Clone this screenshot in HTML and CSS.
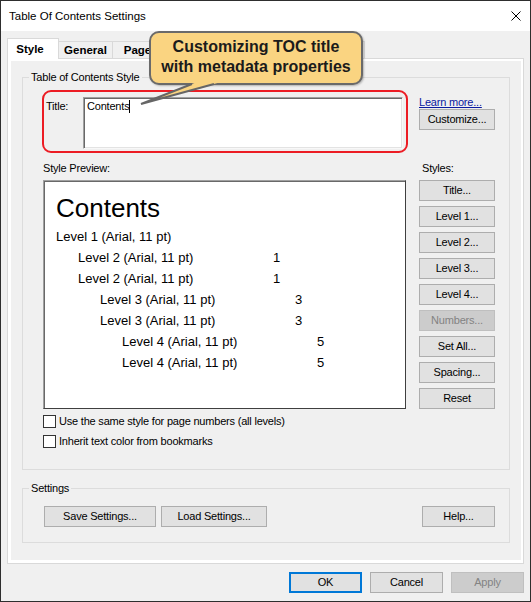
FILE: index.html
```html
<!DOCTYPE html>
<html>
<head>
<meta charset="utf-8">
<link rel="stylesheet" href="styles.css">
</head>
<body>
<div class="window">
  <div class="titlebar">
    <span class="title">Table Of Contents Settings</span>
    <svg class="close" width="10" height="10" viewBox="0 0 10 10"><path d="M0.5 0.5L9.5 9.5M9.5 0.5L0.5 9.5" stroke="#000" stroke-width="1" fill="none"/></svg>
  </div>
  <div class="tabs">
    <div class="tab active t-style">Style</div>
    <div class="tab t-general">General</div>
    <div class="tab t-page">Page Numbers</div>
    <div class="tab t-lead">Leaders</div>
    <div class="tab t-adv">Advanced</div>
  </div>
  <div class="panel">
    <div class="page">
      <fieldset class="group main">
        <legend>Table of Contents Style</legend>
        <div class="grid">
          <div class="title-row">
            <span class="title-label">Title:</span>
            <div class="textbox">Contents<span class="caret"></span></div>
            <div class="highlight"></div>
          </div>
          <div class="title-side">
            <a class="link">Learn more...</a>
            <button class="btn customize">Customize...</button>
          </div>
          <div class="lbl">Style Preview:</div>
          <div class="lbl styles-lbl">Styles:</div>
          <div class="preview">
            <div class="pv-title">Contents</div>
            <div class="pv-row">Level 1 (Arial, 11 pt)</div>
            <div class="pv-row l2"><span class="pv-text">Level 2 (Arial, 11 pt)</span><span>1</span></div>
            <div class="pv-row l2"><span class="pv-text">Level 2 (Arial, 11 pt)</span><span>1</span></div>
            <div class="pv-row l3"><span class="pv-text">Level 3 (Arial, 11 pt)</span><span>3</span></div>
            <div class="pv-row l3"><span class="pv-text">Level 3 (Arial, 11 pt)</span><span>3</span></div>
            <div class="pv-row l4"><span class="pv-text">Level 4 (Arial, 11 pt)</span><span>5</span></div>
            <div class="pv-row l4"><span class="pv-text">Level 4 (Arial, 11 pt)</span><span>5</span></div>
          </div>
          <div class="style-buttons">
            <button class="btn">Title...</button>
            <button class="btn">Level 1...</button>
            <button class="btn">Level 2...</button>
            <button class="btn">Level 3...</button>
            <button class="btn">Level 4...</button>
            <button class="btn" disabled>Numbers...</button>
            <button class="btn">Set All...</button>
            <button class="btn">Spacing...</button>
            <button class="btn">Reset</button>
          </div>
        </div>
        <div class="checks">
          <label class="check"><span class="box"></span><span>Use the same style for page numbers (all levels)</span></label>
          <label class="check"><span class="box"></span><span>Inherit text color from bookmarks</span></label>
        </div>
      </fieldset>
      <fieldset class="group settings">
        <legend>Settings</legend>
        <div class="settings-row">
          <button class="btn save">Save Settings...</button>
          <button class="btn load">Load Settings...</button>
          <button class="btn help">Help...</button>
        </div>
      </fieldset>
    </div>
  </div>
  <div class="footer">
    <button class="btn fbtn ok">OK</button>
    <button class="btn fbtn">Cancel</button>
    <button class="btn fbtn" disabled>Apply</button>
  </div>

  <div class="callout">Customizing TOC title<br>with metadata properties</div>
  <svg class="tail" width="90" height="30" viewBox="0 0 90 30">
    <polygon points="61,4 5,26 85,4" fill="#fad481"/>
    <polyline points="56,6 5,26 78,6" fill="none" stroke="#666" stroke-width="2" stroke-linejoin="miter"/>
  </svg>
</div>
</body>
</html>
```

FILE: styles.css
```css
html, body {
  margin: 0;
  padding: 0;
}
body {
  font-family: "Liberation Sans", Arial, sans-serif;
  font-size: 11px;
  letter-spacing: -0.2px;
  color: #000;
  background: #fff;
}
.window {
  width: 531px;
  height: 602px;
  box-sizing: border-box;
  border: 1px solid #2e2e2e;
  background: #f0f0f0;
  position: relative;
  display: flex;
  flex-direction: column;
}
.titlebar {
  height: 30px;
  flex: none;
  background: #fff;
  display: flex;
  align-items: center;
  justify-content: space-between;
  padding: 0 9px 0 8px;
  font-size: 11.5px;
  letter-spacing: 0;
}
.close {
  display: block;
}
.tabs {
  display: flex;
  align-items: flex-end;
  height: 20px;
  margin: 7px 0 0 6px;
  flex: none;
}
.tab {
  box-sizing: border-box;
  height: 17px;
  border: 1px solid #d9d9d9;
  border-bottom: 0;
  background: #f0f0f0;
  font-weight: bold;
  font-size: 11.5px;
  letter-spacing: 0;
  display: flex;
  align-items: center;
  justify-content: center;
  margin-left: -1px;
}
.tab.active {
  height: 21px;
  margin-bottom: -1px;
  margin-left: 0;
  background: #fff;
  position: relative;
  z-index: 1;
  padding-right: 6px;
}
.t-style { width: 52px; }
.t-general { width: 55px; }
.t-page { width: 104px; }
.t-lead { width: 80px; }
.t-adv { width: 71px; padding-left: 6px; }

.panel {
  margin: 0 6px;
  border: 1px solid #d9d9d9;
  background: #fff;
  padding: 2px 2px 3px 3px;
  flex: none;
}
.page {
  background: #f0f0f0;
  padding: 9px 11px 17px 11px;
}
.group {
  margin: 0;
  border: 1px solid #dcdcdc;
  min-width: 0;
}
.group legend {
  padding: 0 2px;
  line-height: 14px;
}
.main {
  padding: 13px 14px 21px 20px;
}
.main legend {
  margin-left: -14px;
}
.settings {
  margin-top: 11px;
  padding: 11px 14px 15px 21px;
}
.settings legend {
  margin-left: -15px;
}

.grid {
  display: grid;
  grid-template-columns: 363px 76px;
  column-gap: 13px;
}
.title-row {
  display: flex;
  align-items: flex-start;
  position: relative;
  height: 52px;
}
.title-label {
  width: 37px;
  padding: 2px 0 0 3px;
  line-height: 14px;
}
.textbox {
  width: 320px;
  height: 52px;
  box-sizing: border-box;
  border: 1px solid;
  border-color: #a0a0a0 #f8f8f8 #f8f8f8 #a0a0a0;
  box-shadow: inset 1px 1px 0 #696969, inset -1px -1px 0 #e3e3e3;
  background: #fff;
  padding: 1px 0 0 3px;
  line-height: 14px;
}
.caret {
  display: inline-block;
  width: 1px;
  height: 13px;
  background: #000;
  vertical-align: -3px;
}
.highlight {
  position: absolute;
  left: -1px;
  top: -7px;
  width: 366px;
  height: 63px;
  box-sizing: border-box;
  border: 2px solid #ec1c24;
  border-radius: 9px;
  pointer-events: none;
}
.title-side {
  display: flex;
  flex-direction: column;
}
.link {
  display: block;
  margin-top: -2px;
  line-height: 14px;
  color: #0a1aa0;
  text-decoration: underline;
  white-space: nowrap;
}
.customize {
  margin-top: 6px;
}
.lbl {
  margin-top: 12px;
  line-height: 14px;
}
.styles-lbl {
  padding-left: 3px;
}
.preview {
  margin-top: 5px;
  width: 363px;
  height: 229px;
  box-sizing: border-box;
  border: 1px solid;
  border-color: #a0a0a0 #3f3f3f #3f3f3f #a0a0a0;
  box-shadow: inset 1px 1px 0 #696969;
  background: #fff;
  padding: 12px 0 0 12px;
  font-family: "Liberation Sans", Arial, sans-serif;
  letter-spacing: 0;
}
.pv-title {
  font-size: 26px;
  line-height: 30px;
  margin-bottom: 3px;
}
.pv-row {
  display: flex;
  font-size: 13px;
  line-height: 21px;
  white-space: nowrap;
}
.pv-text {
  width: 195px;
}
.l2 { padding-left: 22px; }
.l3 { padding-left: 44px; }
.l4 { padding-left: 66px; }

.style-buttons {
  margin-top: 5px;
  display: flex;
  flex-direction: column;
  gap: 5px;
}

.btn {
  font: inherit;
  letter-spacing: inherit;
  box-sizing: border-box;
  height: 21px;
  margin: 0;
  padding: 0;
  border: 1px solid #adadad;
  background: #e1e1e1;
  color: #000;
  line-height: 19px;
  text-align: center;
  white-space: nowrap;
}
.btn:disabled {
  background: #cccccc;
  border-color: #bfbfbf;
  color: #838383;
}

.checks {
  margin-top: 5px;
  display: flex;
  flex-direction: column;
  gap: 6px;
}
.check {
  display: flex;
  align-items: center;
  gap: 3px;
  height: 14px;
  line-height: 14px;
}
.box {
  width: 13px;
  height: 13px;
  box-sizing: border-box;
  border: 1px solid #333;
  background: #fff;
  flex: none;
}

.settings-row {
  display: flex;
  gap: 5px;
}
.save { width: 112px; }
.load { width: 106px; }
.help { width: 73px; margin-left: auto; }

.footer {
  margin-top: 8px;
  padding-right: 6px;
  display: flex;
  justify-content: flex-end;
  gap: 8px;
}
.fbtn {
  width: 73px;
}
.ok {
  border: 2px solid #0078d7;
  line-height: 17px;
}

.callout {
  position: absolute;
  left: 148px;
  top: 30px;
  width: 214px;
  height: 54px;
  box-sizing: border-box;
  border: 2px solid #6a6a6a;
  border-radius: 10px;
  background: #fad481;
  box-shadow: 1px 1px 2px rgba(0, 0, 0, 0.25);
  font-weight: bold;
  font-size: 16px;
  line-height: 20px;
  letter-spacing: 0;
  color: #1b1b1b;
  text-align: center;
  padding-top: 4px;
  z-index: 5;
}
.tail {
  position: absolute;
  left: 135px;
  top: 77px;
  z-index: 6;
  overflow: visible;
}
```
